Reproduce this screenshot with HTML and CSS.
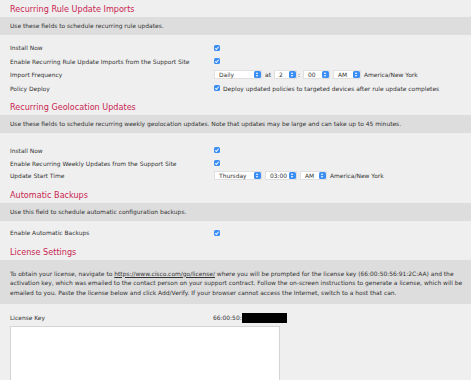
FILE: index.html
```html
<!DOCTYPE html>
<html>
<head>
<meta charset="utf-8">
<link rel="stylesheet" href="styles.css">
</head>
<body>
<div class="page">
  <section class="sec">
    <h2 class="title">Recurring Rule Update Imports</h2>
    <div class="band">Use these fields to schedule recurring rule updates.</div>
    <div class="rows first">
      <div class="row"><span class="label">Install Now</span><span class="ctl"><span class="cb"></span></span></div>
      <div class="row"><span class="label">Enable Recurring Rule Update Imports from the Support Site</span><span class="ctl"><span class="cb"></span></span></div>
      <div class="row"><span class="label">Import Frequency</span><span class="ctl">
        <span class="sel w-daily">Daily<span class="step"></span></span>
        <span class="txt">at</span>
        <span class="sel w-hr">2<span class="step"></span></span>
        <span class="txt colon">:</span>
        <span class="sel w-min">00<span class="step"></span></span>
        <span class="sel w-ampm">AM<span class="step"></span></span>
        <span class="txt">America/New York</span>
      </span></div>
      <div class="row"><span class="label">Policy Deploy</span><span class="ctl"><span class="cb"></span><span class="txt">Deploy updated policies to targeted devices after rule update completes</span></span></div>
    </div>
  </section>
  <section class="sec">
    <h2 class="title">Recurring Geolocation Updates</h2>
    <div class="band">Use these fields to schedule recurring weekly geolocation updates. Note that updates may be large and can take up to 45 minutes.</div>
    <div class="rows second">
      <div class="row"><span class="label">Install Now</span><span class="ctl"><span class="cb"></span></span></div>
      <div class="row"><span class="label">Enable Recurring Weekly Updates from the Support Site</span><span class="ctl"><span class="cb"></span></span></div>
      <div class="row"><span class="label">Update Start Time</span><span class="ctl">
        <span class="sel w-day">Thursday<span class="step"></span></span>
        <span class="sel w-time">03:00<span class="step"></span></span>
        <span class="sel w-ampm2">AM<span class="step"></span></span>
        <span class="txt">America/New York</span>
      </span></div>
    </div>
  </section>
  <section class="sec">
    <h2 class="title">Automatic Backups</h2>
    <div class="band">Use this field to schedule automatic configuration backups.</div>
    <div class="rows third">
      <div class="row"><span class="label">Enable Automatic Backups</span><span class="ctl"><span class="cb"></span></span></div>
    </div>
  </section>
  <section class="sec">
    <h2 class="title">License Settings</h2>
    <div class="band tall">To obtain your license, navigate to <span class="link">https://www.cisco.com/go/license/</span> where you will be prompted for the license key (66:00:50:56:91:2C:AA) and the activation key, which was emailed to the contact person on your support contract. Follow the on-screen instructions to generate a license, which will be emailed to you. Paste the license below and click Add/Verify. If your browser cannot access the Internet, switch to a host that can.</div>
    <div class="license">
      <div class="keyrow"><span class="label">License Key</span><span class="keyval">66:00:50:<span class="redact"></span></span></div>
      <div class="lic-body">
        <div class="area"></div>
        <div class="side"></div>
      </div>
    </div>
  </section>
</div>
</body>
</html>
```
FILE: styles.css
```css
html, body {
  margin: 0;
  padding: 0;
  background: #ffffff;
}
body {
  font-family: "DejaVu Sans", Verdana, sans-serif;
  color: #333333;
  overflow: hidden;
  height: 380px;
}
.page {
  width: 471px;
  background: #efefef;
  padding-top: 3px;
  min-height: 380px;
}
.title {
  margin: 0;
  padding: 0 0 0 10px;
  height: 14px;
  line-height: 13px;
  font-size: 8.1px;
  font-weight: normal;
  color: #c9254f;
  font-family: "DejaVu Sans", Verdana, sans-serif;
}
.band {
  background: #dddddd;
  font-size: 5.95px;
  line-height: 10px;
  padding: 4px 10px 4px 10px;
  min-height: 10px;
}
.band.tall {
  padding: 9px 7px 7px 10px;
  line-height: 9.6px;
}
.link {
  text-decoration: underline;
}
.rows {
  font-size: 5.95px;
}
.rows.first { padding: 6px 0 6px 0; }
.rows.second { padding: 11px 0 7px 0; }
.rows.third { padding: 5px 0 6px 0; }
.row {
  display: flex;
  align-items: center;
  height: 13.5px;
  padding-left: 10px;
}
.rows.second .row { height: 12.7px; }
.label {
  width: 204px;
  flex: none;
  white-space: nowrap;
}
.ctl {
  display: flex;
  align-items: center;
  gap: 3px;
}
.cb {
  width: 6px;
  height: 6px;
  border-radius: 1.5px;
  background: #3b8ef3;
  position: relative;
  flex: none;
}
.cb::after {
  content: "";
  position: absolute;
  left: 2px;
  top: 0.8px;
  width: 1.2px;
  height: 2.8px;
  border: solid #ffffff;
  border-width: 0 0.8px 0.8px 0;
  transform: rotate(40deg);
}
.txt {
  white-space: nowrap;
}
.txt.colon { margin-left: -2px; }
.sel {
  position: relative;
  display: inline-flex;
  align-items: center;
  height: 9px;
  background: #ffffff;
  border: 1px solid #e0e0e0;
  box-sizing: border-box;
  padding-left: 4px;
  flex: none;
}
.step {
  position: absolute;
  right: 0;
  top: 0;
  width: 7px;
  height: 7px;
  border-radius: 1.5px;
  background: #3b8ef3;
}
.step::before, .step::after {
  content: "";
  position: absolute;
  left: 2px;
  width: 0;
  height: 0;
  border-left: 1.5px solid transparent;
  border-right: 1.5px solid transparent;
}
.step::before {
  top: 1px;
  border-bottom: 2px solid #ffffff;
}
.step::after {
  bottom: 1px;
  border-top: 2px solid #ffffff;
}
.w-daily { width: 48px; }
.w-hr { width: 23px; }
.w-min { width: 27px; }
.w-ampm { width: 28px; }
.w-day { width: 48px; }
.w-time { width: 32px; }
.w-ampm2 { width: 27px; }
.license {
  font-size: 5.95px;
}
.keyrow {
  display: flex;
  align-items: center;
  height: 11px;
  padding-top: 8px;
  padding-left: 10px;
}
.keyval {
  display: inline-flex;
  align-items: center;
  margin-left: -1px;
}
.redact {
  display: inline-block;
  width: 45px;
  height: 10px;
  background: #000000;
}
.lic-body {
  display: flex;
  padding-top: 3px;
  padding-left: 10px;
}
.area {
  width: 270px;
  height: 80px;
  background: #ffffff;
  border: 1px solid #d4d4d4;
  box-sizing: border-box;
}
.side {
  flex: 1;
}
```
